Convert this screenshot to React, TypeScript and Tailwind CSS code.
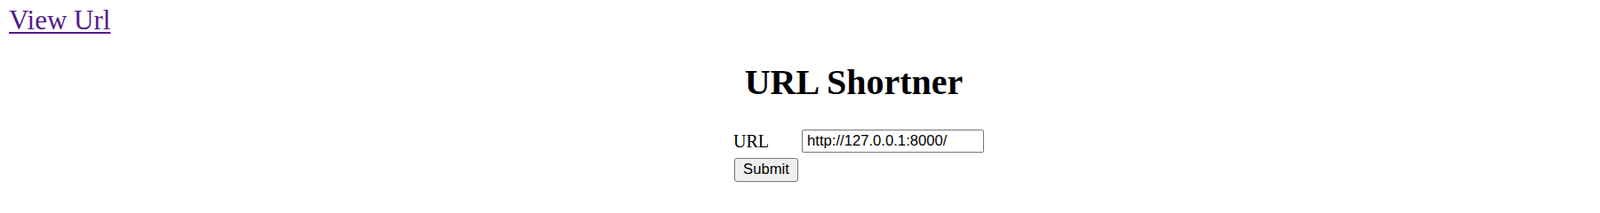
export default function App() {
  return (
    <div className="min-h-[203px] bg-white font-['Liberation_Serif','Times_New_Roman',serif] text-black">
      <div className="pl-[10px] pt-[8px]">
        <a
          href="#"
          className="text-[31px] leading-[30px] text-[#551A8B] underline decoration-[2px] underline-offset-[3px]"
        >
          View Url
        </a>
      </div>

      <div className="ml-[825px] mt-[33px] w-[271px]">
        <h1 className="text-center text-[40px] font-bold leading-[40px]">URL Shortner</h1>
      </div>

      <form className="ml-[825px] mt-[33px] flex flex-col items-start gap-[6px]" onSubmit={(e) => e.preventDefault()}>
        <div className="flex items-center">
          <label htmlFor="url" className="w-[77px] text-[20px] leading-[20px]">
            URL
          </label>
          <input
            id="url"
            type="text"
            defaultValue="http://127.0.0.1:8000/"
            className="h-[26px] w-[205px] rounded-[2px] border border-[#767676] px-[5px] font-['Liberation_Sans',Arial,sans-serif] text-[16.67px] text-black outline-none"
          />
        </div>
        <button
          type="submit"
          className="ml-[1px] h-[27px] w-[72px] rounded-[3px] border border-[#767676] bg-[#efefef] font-['Liberation_Sans',Arial,sans-serif] text-[16.67px] leading-none text-black"
        >
          Submit
        </button>
      </form>
    </div>
  );
}
